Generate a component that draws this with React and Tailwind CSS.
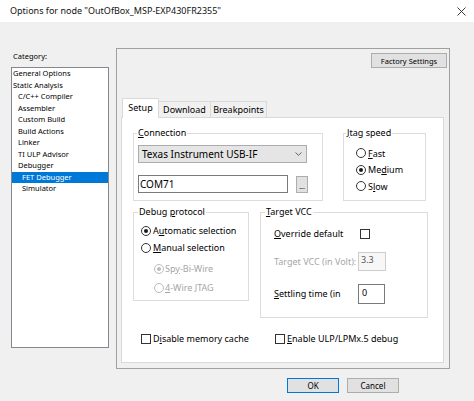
import React from "react";

function Radio({ checked, disabled }) {
  return (
    <span
      className={`w-[10px] h-[10px] rounded-full border bg-white flex items-center justify-center shrink-0 ${
        disabled ? "border-[#bcbcbc]" : "border-[#333333]"
      }`}
    >
      {checked && (
        <span
          className={`w-[4px] h-[4px] rounded-full ${
            disabled ? "bg-[#bcbcbc]" : "bg-[#1a1a1a]"
          }`}
        />
      )}
    </span>
  );
}

function Check() {
  return <span className="w-[10px] h-[10px] border border-[#333333] bg-white shrink-0" />;
}

const items = [
  ["General Options", 0],
  ["Static Analysis", 0],
  ["C/C++ Compiler", 1],
  ["Assembler", 1],
  ["Custom Build", 1],
  ["Build Actions", 1],
  ["Linker", 1],
  ["TI ULP Advisor", 1],
  ["Debugger", 1],
  ["FET Debugger", 2],
  ["Simulator", 2],
];

export default function App() {
  return (
    <div className="w-[474px] h-[401px] bg-[#f0f0f0] overflow-hidden flex flex-col text-black font-['Noto_Sans',sans-serif]">
      {/* title bar */}
      <div className="h-[22px] bg-white flex items-center justify-between pl-[10px] pr-[7px] shrink-0">
        <span className="text-[9px] leading-[12px] text-[#111]">
          Options for node "OutOfBox_MSP-EXP430FR2355"
        </span>
        <svg width="9" height="9" viewBox="0 0 9 9" className="mr-[1px]">
          <path d="M0.5 0.5 L8.5 8.5 M8.5 0.5 L0.5 8.5" stroke="#222" strokeWidth="0.9" />
        </svg>
      </div>

      <div className="flex flex-1">
        {/* left column */}
        <div className="ml-[11px] w-[98px] pt-[29px] flex flex-col">
          <div className="h-[10px] leading-[10px] text-[7.5px] pl-[2px]">Category:</div>
          <div className="mt-[6px] h-[281px] bg-white border border-[#828790] pt-0">
            {items.map(([t, lvl]) => {
              const sel = t === "FET Debugger";
              return (
                <div
                  key={t}
                  className={`h-[11.5px] leading-[11.5px] text-[7.5px] whitespace-nowrap ${
                    lvl === 0 ? "pl-[1px]" : lvl === 1 ? "pl-[6px]" : "pl-[10px]"
                  } ${sel ? "bg-[#0078d7] text-white" : ""}`}
                >
                  {t}
                </div>
              );
            })}
          </div>
        </div>

        {/* right column */}
        <div className="ml-[7px] mt-[26px] flex flex-col">
          <div className="w-[334px] h-[321px] border border-[#a0a0a0] flex flex-col">
            <div className="self-end mt-[4px] mr-[2px] w-[76px] h-[15px] bg-[#e1e1e1] border border-[#adadad] flex items-center justify-center text-[7.5px] leading-[10px]">
              Factory Settings
            </div>

            {/* tabs */}
            <div className="mt-[30px] ml-[5px] h-[19px] flex items-end">
              <div className="relative z-10 -mb-[1px] w-[37px] h-[20px] bg-white border border-[#d9d9d9] border-b-0 flex items-center justify-center text-[9px] pb-[1px]">
                Setup
              </div>
              <div className="-ml-[1px] w-[53px] h-[16px] bg-[#f0f0f0] border border-[#d9d9d9] border-b-0 flex items-center justify-center text-[9px]">
                Download
              </div>
              <div className="-ml-[1px] w-[57px] h-[16px] bg-[#f0f0f0] border border-[#d9d9d9] border-b-0 flex items-center justify-center text-[9px]">
                Breakpoints
              </div>
            </div>

            <div className="ml-[4px] w-[323px] h-[246px] border border-[#d9d9d9] bg-white pt-[8px] pl-[11px] flex flex-col text-[9px]">
              {/* row 1 */}
              <div className="flex gap-[20px]">
                <fieldset className="w-[190px] h-[75px] border border-[#dcdcdc] px-[3px] min-w-0">
                  <legend className="px-[1px] text-[9px] leading-[14px]">
                    <span className="underline underline-offset-1">C</span>onnection
                  </legend>
                  <div className="ml-[1px] mt-[5px] w-[169px] h-[18px] bg-[#e5e5e5] border border-[#acacac] flex items-center justify-between pl-[3px] pr-[4px]">
                    <span className="text-[10px] leading-[14px]">Texas Instrument USB-IF</span>
                    <svg width="7" height="4" viewBox="0 0 7 4">
                      <path d="M0.5 0.5 L3.5 3.3 L6.5 0.5" stroke="#555" strokeWidth="0.9" fill="none" />
                    </svg>
                  </div>
                  <div className="ml-[1px] mt-[12px] flex items-center">
                    <div className="w-[150px] h-[18px] bg-white border border-[#7a7a7a] flex items-center pl-[1px]">
                      <span className="text-[10px] leading-[14px]">COM71</span>
                    </div>
                    <div className="ml-[8px] w-[12px] h-[17px] bg-[#e1e1e1] border border-[#adadad] flex items-end justify-center pb-[2px]">
                      <span className="text-[7px] leading-[7px]">...</span>
                    </div>
                  </div>
                </fieldset>

                <fieldset className="w-[83px] h-[75px] border border-[#dcdcdc] px-[2px] min-w-0">
                  <legend className="px-[1px] text-[9px] leading-[14px]">
                    <span className="underline underline-offset-1">J</span>tag speed
                  </legend>
                  <div className="mt-[5px] pl-[10px] flex flex-col">
                    <div className="h-[16.5px] flex items-center gap-[2px]">
                      <Radio />
                      <span>
                        <span className="underline underline-offset-1">F</span>ast
                      </span>
                    </div>
                    <div className="h-[16.5px] flex items-center gap-[2px]">
                      <Radio checked />
                      <span>
                        Me<span className="underline underline-offset-1">d</span>ium
                      </span>
                    </div>
                    <div className="h-[16.5px] flex items-center gap-[2px]">
                      <Radio />
                      <span>
                        S<span className="underline underline-offset-1">l</span>ow
                      </span>
                    </div>
                  </div>
                </fieldset>
              </div>

              {/* row 2 */}
              <div className="mt-[4px] flex items-start gap-[11px]">
                <fieldset className="w-[116px] h-[96px] border border-[#dcdcdc] px-[4px] min-w-0">
                  <legend className="px-[1px] text-[9px] leading-[14px]">
                    Debug <span className="underline underline-offset-1">p</span>rotocol
                  </legend>
                  <div className="mt-[3px] pl-[3px] flex flex-col">
                    <div className="h-[17px] flex items-center gap-[2px]">
                      <Radio checked />
                      <span>
                        A<span className="underline underline-offset-1">u</span>tomatic selection
                      </span>
                    </div>
                    <div className="h-[17px] flex items-center gap-[2px]">
                      <Radio />
                      <span>
                        <span className="underline underline-offset-1">M</span>anual selection
                      </span>
                    </div>
                  </div>
                  <div className="mt-[3px] pl-[16px] flex flex-col text-[#a6a6a6]">
                    <div className="h-[19px] flex items-center gap-[1px]">
                      <Radio checked disabled />
                      <span>
                        Sp<span className="underline underline-offset-1">y</span>-Bi-Wire
                      </span>
                    </div>
                    <div className="h-[19px] flex items-center gap-[1px]">
                      <Radio disabled />
                      <span>
                        <span className="underline underline-offset-1">4</span>-Wire JTAG
                      </span>
                    </div>
                  </div>
                </fieldset>

                <fieldset className="w-[168px] h-[113px] border border-[#dcdcdc] px-[4px] min-w-0">
                  <legend className="px-[1px] text-[9px] leading-[14px]">
                    <span className="underline underline-offset-1">T</span>arget VCC
                  </legend>
                  <div className="pl-[9px] flex flex-col">
                    <div className="mt-[7px] h-[16px] flex items-center">
                      <span className="w-[86px] whitespace-nowrap">
                        <span className="underline underline-offset-1">O</span>verride default
                      </span>
                      <Check />
                    </div>
                    <div className="mt-[10px] h-[19px] flex items-center">
                      <span className="w-[84px] whitespace-nowrap text-[#a6a6a6] overflow-visible">
                        Target VCC (in Volt):
                      </span>
                      <div className="w-[28px] h-[19px] border border-[#cccccc] bg-[#f7f7f7] pl-[2px] pt-[1px] text-[9px] leading-[12px] text-[#555]">
                        3.3
                      </div>
                    </div>
                    <div className="mt-[13px] h-[20px] flex items-center">
                      <span className="w-[84px] whitespace-nowrap">
                        <span className="underline underline-offset-1">S</span>ettling time (in
                      </span>
                      <div className="w-[27px] h-[20px] border border-[#7a7a7a] bg-white pl-[3px] pt-[2px] text-[9px] leading-[12px]">
                        0
                      </div>
                    </div>
                  </div>
                </fieldset>
              </div>

              {/* row 3 */}
              <div className="mt-[14px] h-[14px] flex items-center">
                <div className="ml-[8px] w-[134px] flex items-center gap-[2px]">
                  <Check />
                  <span>
                    D<span className="underline underline-offset-1">i</span>sable memory cache
                  </span>
                </div>
                <div className="flex items-center gap-[2px]">
                  <Check />
                  <span>
                    <span className="underline underline-offset-1">E</span>nable ULP/LPMx.5 debug
                  </span>
                </div>
              </div>
            </div>
          </div>

          {/* bottom buttons */}
          <div className="mt-[9px] ml-[171px] flex gap-[8px]">
            <div className="w-[52px] h-[15px] bg-[#e1e1e1] border border-[#0078d7] flex items-center justify-center text-[8px] leading-[10px]">
              OK
            </div>
            <div className="w-[52px] h-[15px] bg-[#e1e1e1] border border-[#adadad] flex items-center justify-center text-[8px] leading-[10px]">
              Cancel
            </div>
          </div>
        </div>
      </div>
    </div>
  );
}
